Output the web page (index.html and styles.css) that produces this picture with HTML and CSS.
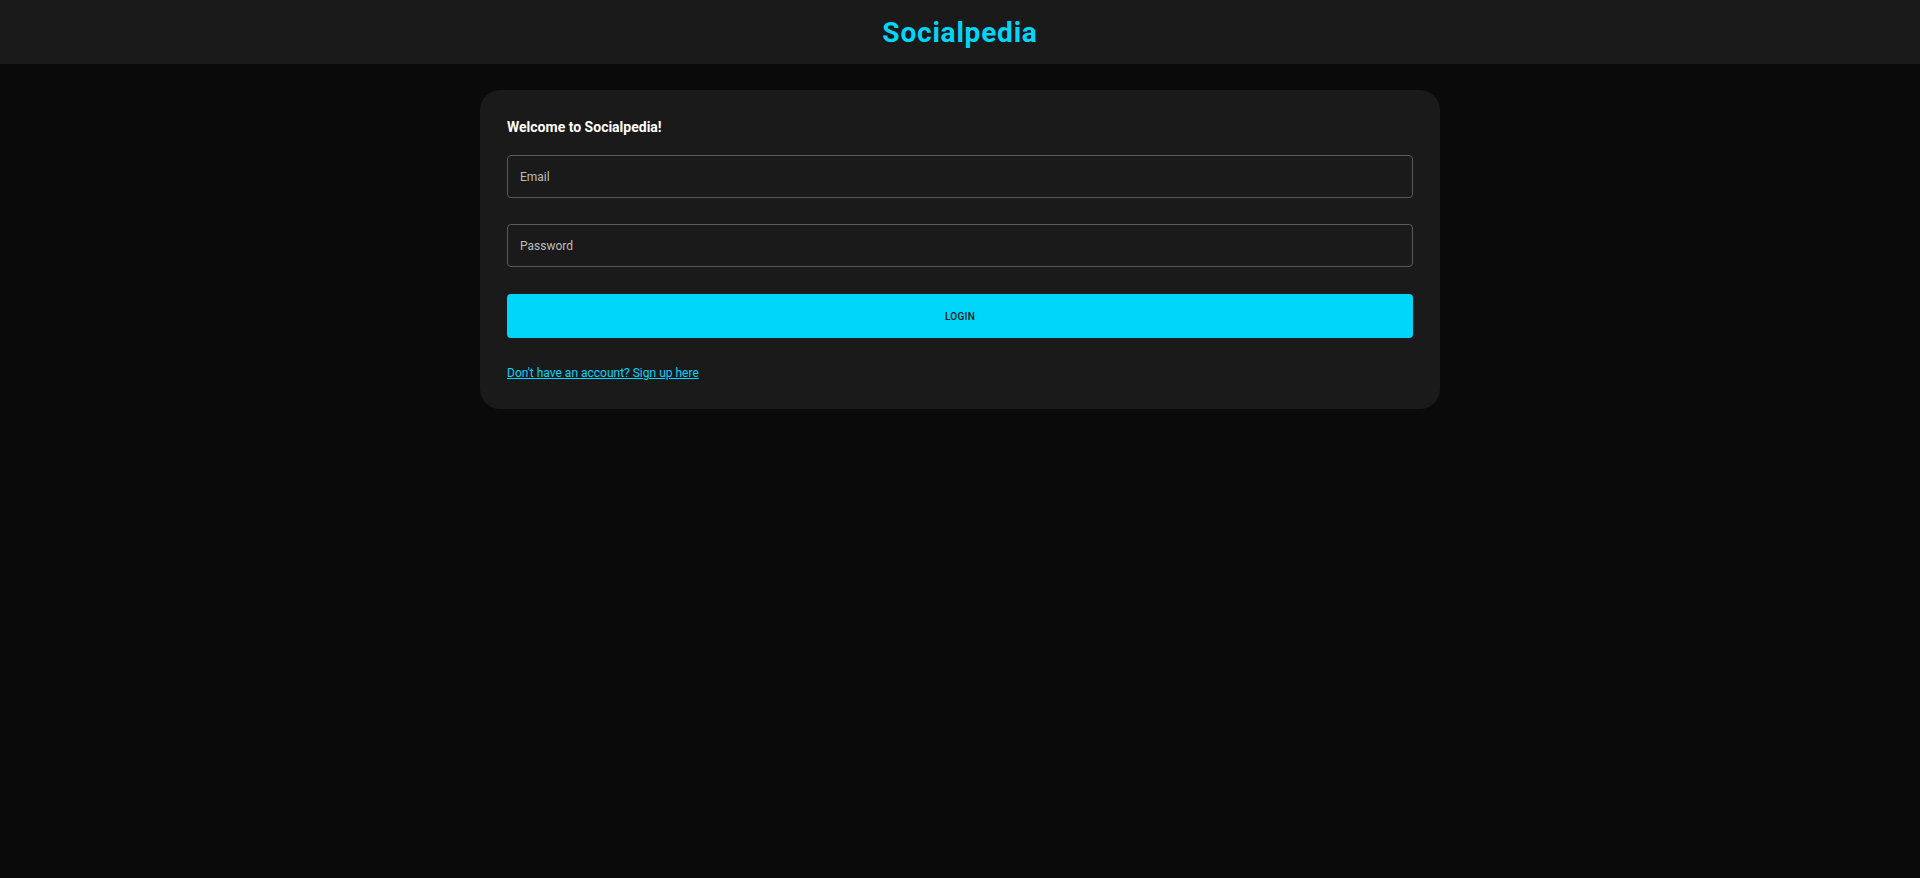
FILE: index.html
```html
<!DOCTYPE html>
<html lang="en">
<head>
  <meta charset="UTF-8" />
  <title>Socialpedia</title>
  <link rel="stylesheet" href="styles.css">
</head>
<body>

<div class="navbar">
  <span class="brand">Socialpedia</span>
</div>

<div class="card">
  <h5 class="welcome">Welcome to Socialpedia!</h5>

  <form class="login-form" onsubmit="return false;">
    <input class="field" type="email" placeholder="Email" />
    <input class="field" type="password" placeholder="Password" />
    <button class="login-btn" type="submit">Login</button>
  </form>

  <a class="switch-link" href="#">Don't have an account? Sign up here</a>
</div>

</body>
</html>
```

FILE: styles.css
```css
body {
  margin: 0;
  background: #0a0a0a;
  font-family: Roboto, "Liberation Sans", sans-serif;
  color: #e0e0e0;
}
.navbar {
  height: 64px;
  background: #1a1a1a;
  display: flex;
  align-items: center;
  justify-content: center;
}
.brand {
  font-size: 28px;
  font-weight: 700;
  letter-spacing: 0.8px;
  color: #00d5fa;
}
.card {
  width: 50%;
  box-sizing: border-box;
  margin: 26px auto;
  padding: 27px;
  background: #1a1a1a;
  border-radius: 20px;
}
.welcome {
  margin: 0 0 17px;
  font-size: 14px;
  line-height: 21px;
  font-weight: 700;
  color: #ffffff;
}
.login-form {
  display: flex;
  flex-direction: column;
  gap: 26px;
}
.field {
  height: 43px;
  box-sizing: border-box;
  padding: 0 12px;
  background: transparent;
  border: 1px solid #5a5a5a;
  border-radius: 4px;
  font-family: inherit;
  font-size: 12px;
  color: #e0e0e0;
  outline: none;
}
.field::placeholder {
  color: #bdbdbd;
}
.login-btn {
  height: 44px;
  margin: 1px 0 26px;
  border: none;
  border-radius: 4px;
  background: #00d5fa;
  color: #1a1a1a;
  font-family: inherit;
  font-size: 10px;
  font-weight: 500;
  text-transform: uppercase;
  letter-spacing: 0.3px;
  cursor: pointer;
}
.switch-link {
  display: block;
  font-size: 12px;
  line-height: 18px;
  color: #00d5fa;
  text-decoration: underline;
}
```
